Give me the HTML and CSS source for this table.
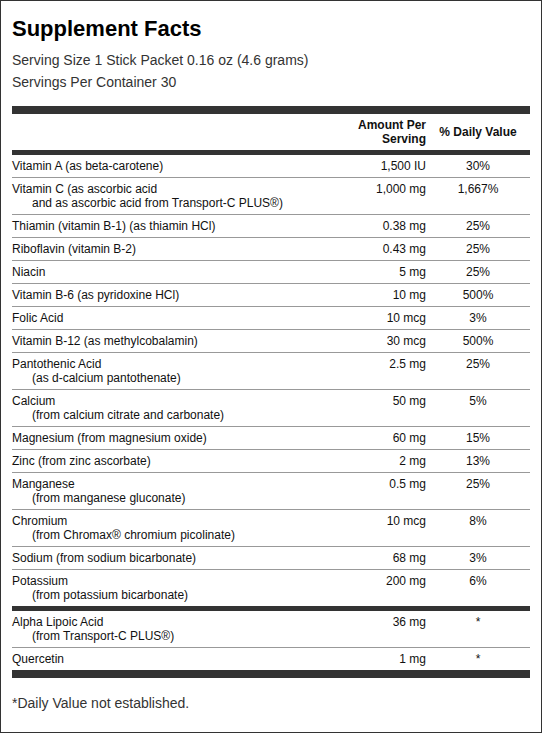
FILE: index.html
```html
<!DOCTYPE html>
<html lang="en">
<head>
  <meta charset="UTF-8" />
  <meta name="viewport" content="width=device-width, initial-scale=1.0"/>
  <title>Supplement Facts</title>
  <link rel="stylesheet" href="styles.css">
</head>
<body>
  <div class="facts">
    <h1>Supplement Facts</h1>
    <p class="serving">Serving Size 1 Stick Packet 0.16 oz (4.6 grams)</p>
    <p class="serving">Servings Per Container 30</p>

    <div class="table">
      <div class="row head">
        <div class="name"></div>
        <div class="amount">Amount Per<br>Serving</div>
        <div class="dv">% Daily Value</div>
      </div>

      <div class="row">
        <div class="name">Vitamin A (as beta-carotene)</div>
        <div class="amount">1,500 IU</div>
        <div class="dv">30%</div>
      </div>
      <div class="row">
        <div class="name">Vitamin C (as ascorbic acid<span class="sub">and as ascorbic acid from Transport-C PLUS®)</span></div>
        <div class="amount">1,000 mg</div>
        <div class="dv">1,667%</div>
      </div>
      <div class="row">
        <div class="name">Thiamin (vitamin B-1) (as thiamin HCl)</div>
        <div class="amount">0.38 mg</div>
        <div class="dv">25%</div>
      </div>
      <div class="row">
        <div class="name">Riboflavin (vitamin B-2)</div>
        <div class="amount">0.43 mg</div>
        <div class="dv">25%</div>
      </div>
      <div class="row">
        <div class="name">Niacin</div>
        <div class="amount">5 mg</div>
        <div class="dv">25%</div>
      </div>
      <div class="row">
        <div class="name">Vitamin B-6 (as pyridoxine HCl)</div>
        <div class="amount">10 mg</div>
        <div class="dv">500%</div>
      </div>
      <div class="row">
        <div class="name">Folic Acid</div>
        <div class="amount">10 mcg</div>
        <div class="dv">3%</div>
      </div>
      <div class="row">
        <div class="name">Vitamin B-12 (as methylcobalamin)</div>
        <div class="amount">30 mcg</div>
        <div class="dv">500%</div>
      </div>
      <div class="row">
        <div class="name">Pantothenic Acid<span class="sub">(as d-calcium pantothenate)</span></div>
        <div class="amount">2.5 mg</div>
        <div class="dv">25%</div>
      </div>
      <div class="row">
        <div class="name">Calcium<span class="sub">(from calcium citrate and carbonate)</span></div>
        <div class="amount">50 mg</div>
        <div class="dv">5%</div>
      </div>
      <div class="row">
        <div class="name">Magnesium (from magnesium oxide)</div>
        <div class="amount">60 mg</div>
        <div class="dv">15%</div>
      </div>
      <div class="row">
        <div class="name">Zinc (from zinc ascorbate)</div>
        <div class="amount">2 mg</div>
        <div class="dv">13%</div>
      </div>
      <div class="row">
        <div class="name">Manganese<span class="sub">(from manganese gluconate)</span></div>
        <div class="amount">0.5 mg</div>
        <div class="dv">25%</div>
      </div>
      <div class="row">
        <div class="name">Chromium<span class="sub">(from Chromax® chromium picolinate)</span></div>
        <div class="amount">10 mcg</div>
        <div class="dv">8%</div>
      </div>
      <div class="row">
        <div class="name">Sodium (from sodium bicarbonate)</div>
        <div class="amount">68 mg</div>
        <div class="dv">3%</div>
      </div>
      <div class="row last">
        <div class="name">Potassium<span class="sub">(from potassium bicarbonate)</span></div>
        <div class="amount">200 mg</div>
        <div class="dv">6%</div>
      </div>

      <div class="row group">
        <div class="name">Alpha Lipoic Acid<span class="sub">(from Transport-C PLUS®)</span></div>
        <div class="amount">36 mg</div>
        <div class="dv">*</div>
      </div>
      <div class="row last end">
        <div class="name">Quercetin</div>
        <div class="amount">1 mg</div>
        <div class="dv">*</div>
      </div>
    </div>

    <p class="note">*Daily Value not established.</p>
  </div>
</body>
</html>
```

FILE: styles.css
```css
body {
  margin: 0;
  font-family: "Liberation Sans", Arial, sans-serif;
  color: #111;
}
.facts {
  width: 542px;
  box-sizing: border-box;
  border: 1px solid #333;
  padding: 15px 11px 21px;
}
h1 {
  margin: 0 0 7px;
  font-size: 22px;
  line-height: 26px;
  font-weight: bold;
  color: #000;
}
.serving {
  margin: 0;
  font-size: 14px;
  line-height: 22px;
  color: #333;
}
.table {
  margin-top: 13px;
  font-size: 12px;
  line-height: 14px;
}
.row {
  display: grid;
  grid-template-columns: 1fr 104px 96px;
  padding: 4px 0;
  border-bottom: 1px solid #999;
}
.row.head {
  border-top: 8px solid #333;
  border-bottom: 5px solid #333;
  font-weight: bold;
  align-items: center;
}
.row.last {
  border-bottom: 0;
}
.row.group {
  border-top: 5px solid #333;
}
.row.end {
  border-bottom: 8px solid #333;
}
.sub {
  display: block;
  padding-left: 20px;
}
.amount {
  text-align: right;
  padding-right: 8px;
}
.dv {
  text-align: center;
  padding-right: 8px;
}
.note {
  margin: 17px 0 0;
  font-size: 14px;
  line-height: 16px;
  color: #333;
}
```
